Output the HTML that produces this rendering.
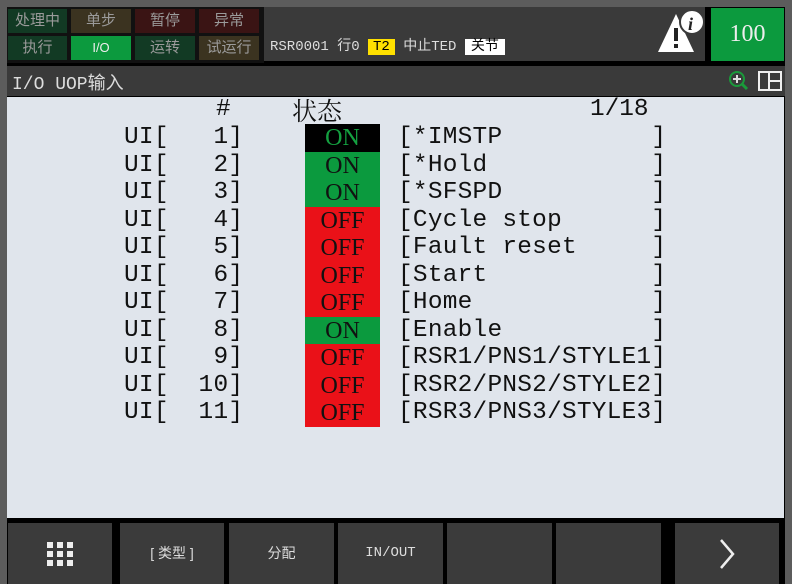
<!DOCTYPE html><html><head><meta charset="utf-8"><style>
*{margin:0;padding:0;box-sizing:border-box}
body{width:792px;height:584px;background:#000;position:relative;overflow:hidden;font-family:"Liberation Sans","Noto Sans CJK SC",sans-serif}
.a{position:absolute}
.sb{position:absolute;height:24px;color:#9a9a9a;font-size:15px;text-align:center;line-height:24px}
.m{font-family:"Liberation Mono","Noto Serif CJK SC",monospace;font-size:24.4px;color:#111;line-height:27.5px;white-space:pre;position:absolute}
.st{position:absolute;left:305px;width:75px;height:27.5px;font-family:"Liberation Serif",serif;font-size:24px;line-height:28px;text-align:center;color:#111}
.on{background:#0b9a3e}.off{background:#ea1118}
.k{position:absolute;top:523px;height:61px;background:#3b3b3b;color:#ddd;font-size:14px;text-align:center;line-height:61px}
</style></head><body>
<div class="a" style="left:0;top:0;width:792px;height:584px;background:#5c5c5c"></div>
<div class="a" style="left:7px;top:7px;width:778px;height:577px;background:#000"></div>
<div class="a" style="left:7px;top:7px;width:257px;height:56px;background:#111"></div>
<div class="sb" style="left:8px;top:9px;width:59px;background:#123a24">处理中</div>
<div class="sb" style="left:71px;top:9px;width:60px;background:#3b3320">单步</div>
<div class="sb" style="left:135px;top:9px;width:60px;background:#3a1414">暂停</div>
<div class="sb" style="left:199px;top:9px;width:60px;background:#3a1414">异常</div>
<div class="sb" style="left:8px;top:36px;width:59px;background:#123a24">执行</div>
<div class="sb" style="left:71px;top:36px;width:60px;background:#0c9a3e;color:#eee;font-size:13px">I/O</div>
<div class="sb" style="left:135px;top:36px;width:60px;background:#123a24">运转</div>
<div class="sb" style="left:199px;top:36px;width:60px;background:#3b3320">试运行</div>
<div class="a" style="left:264px;top:7px;width:441px;height:54px;background:#3a3a3a"></div>
<div class="a" style="left:270px;top:35px;color:#ddd;font-size:14px;font-family:'Liberation Mono','Noto Sans CJK SC',monospace;white-space:pre">RSR0001 行0 <span style="background:#ffe000;color:#000;padding:0 5px">T2</span> 中止TED <span style="background:#fff;color:#000;padding:0 6px">关节</span></div>
<svg class="a" style="left:656px;top:10px" width="50" height="45"><polygon points="20,4 38,42 2,42" fill="#fff"/><rect x="18" y="18" width="4" height="13" fill="#222"/><rect x="18" y="34" width="4" height="4" fill="#222"/><circle cx="36" cy="12" r="12" fill="#fff" stroke="#3a3a3a" stroke-width="2"/><text x="32" y="20" font-family="Liberation Serif" font-style="italic" font-weight="bold" font-size="18" fill="#222">i</text></svg>
<div class="a" style="left:711px;top:8px;width:73px;height:53px;background:#0c9a3e;color:#eee;font-family:'Liberation Serif',serif;font-size:24px;text-align:center;line-height:52px">100</div>
<div class="a" style="left:7px;top:66px;width:778px;height:30px;background:#3a3a3a"></div>
<div class="a" style="left:12px;top:69px;color:#ddd;font-size:18px;font-family:'Liberation Mono','Noto Sans CJK SC',monospace">I/O UOP输入</div>
<svg class="a" style="left:727px;top:69px" width="58" height="24"><circle cx="10" cy="10" r="7" fill="none" stroke="#1a9a3a" stroke-width="2"/><path d="M6 10h8M10 6v8" stroke="#ddd" stroke-width="2"/><path d="M15 15l5 5" stroke="#1a9a3a" stroke-width="3"/><rect x="32" y="3" width="22" height="18" fill="none" stroke="#eee" stroke-width="2"/><path d="M42 3v18M42 12h12" stroke="#eee" stroke-width="2"/></svg>
<div class="a" style="left:7px;top:97px;width:777px;height:421px;background:#e0e5ec"></div>
<div class="m" style="left:216px;top:96px">#</div>
<div class="a" style="left:292px;top:96px;font-size:25px;font-family:'Noto Serif CJK SC',serif;color:#111;line-height:28px">状态</div>
<div class="m" style="left:590px;top:96px">1/18</div>
<div class="m" style="left:124px;top:124px;letter-spacing:0.27px">UI[   1]
UI[   2]
UI[   3]
UI[   4]
UI[   5]
UI[   6]
UI[   7]
UI[   8]
UI[   9]
UI[  10]
UI[  11]</div>
<div class="m" style="left:398px;top:124px;letter-spacing:0.27px">[*IMSTP          ]
[*Hold           ]
[*SFSPD          ]
[Cycle stop      ]
[Fault reset     ]
[Start           ]
[Home            ]
[Enable          ]
[RSR1/PNS1/STYLE1]
[RSR2/PNS2/STYLE2]
[RSR3/PNS3/STYLE3]</div>
<div class="st" style="top:124px;background:#000;color:#14a040">ON</div>
<div class="st on" style="top:151.5px">ON</div>
<div class="st on" style="top:179px">ON</div>
<div class="st off" style="top:206.5px">OFF</div>
<div class="st off" style="top:234px">OFF</div>
<div class="st off" style="top:261.5px">OFF</div>
<div class="st off" style="top:289px">OFF</div>
<div class="st on" style="top:316.5px">ON</div>
<div class="st off" style="top:344px">OFF</div>
<div class="st off" style="top:371.5px">OFF</div>
<div class="st off" style="top:399px">OFF</div>
<div class="k" style="left:8px;width:104px"><svg width="26" height="24" style="vertical-align:middle"><g fill="#eee"><rect x="0" y="0" width="6" height="6"/><rect x="10" y="0" width="6" height="6"/><rect x="20" y="0" width="6" height="6"/><rect x="0" y="9" width="6" height="6"/><rect x="10" y="9" width="6" height="6"/><rect x="20" y="9" width="6" height="6"/><rect x="0" y="18" width="6" height="6"/><rect x="10" y="18" width="6" height="6"/><rect x="20" y="18" width="6" height="6"/></g></svg></div>
<div class="k" style="left:120px;width:104px">[ 类型 ]</div>
<div class="k" style="left:229px;width:105px">分配</div>
<div class="k" style="left:338px;width:105px;font-family:'Liberation Mono',monospace">IN/OUT</div>
<div class="k" style="left:447px;width:105px"></div>
<div class="k" style="left:556px;width:105px"></div>
<div class="k" style="left:675px;width:104px"><svg width="20" height="34" style="vertical-align:middle"><path d="M4 3l12 14-12 14" fill="none" stroke="#eee" stroke-width="2.5"/></svg></div>
</body></html>
